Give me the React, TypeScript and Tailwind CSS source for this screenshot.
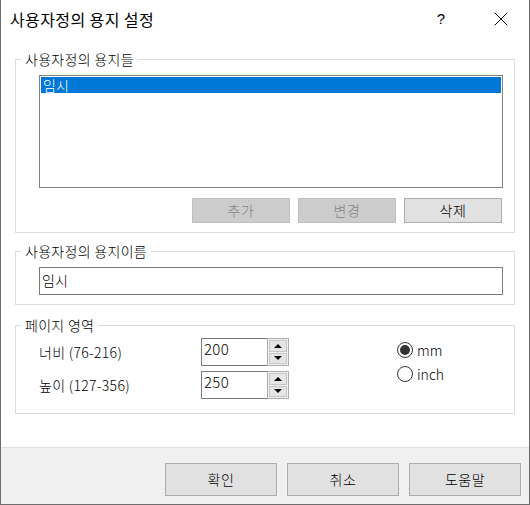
import { X } from "lucide-react";

const ko = { fontFamily: '"Noto Sans CJK KR", "Noto Sans", sans-serif' };
const latin = { fontFamily: '"Liberation Sans", Arial, sans-serif' };

function Group({ label, children, className }: { label: string; children: React.ReactNode; className?: string }) {
  return (
    <fieldset className={"border border-[#dcdcdc] " + (className ?? "")}>
      <legend className="ml-[5px] px-[4px] text-[14px] leading-[16px] tracking-[0.3px] text-black">{label}</legend>
      {children}
    </fieldset>
  );
}

function Spinner({ value }: { value: string }) {
  return (
    <div className="flex h-[28px] w-[88px]">
      <div className="flex-1 border border-[#7a7a7a] border-r-0 bg-white pl-[2px] text-[15px] leading-[20px] tracking-[0.3px] text-black">
        {value}
      </div>
      <div className="flex w-[22px] flex-col gap-[1px] border border-[#adadad] bg-[#f0f0f0] p-[1px]">
        <div className="flex flex-1 items-center justify-center border border-[#c8c8c8] bg-[#e5e5e5]">
          <span className="h-0 w-0 border-x-[4px] border-b-[4px] border-x-transparent border-b-black" />
        </div>
        <div className="flex flex-1 items-center justify-center border border-[#c8c8c8] bg-[#e5e5e5]">
          <span className="h-0 w-0 border-x-[4px] border-t-[4px] border-x-transparent border-t-black" />
        </div>
      </div>
    </div>
  );
}

function Radio({ label, checked }: { label: string; checked?: boolean }) {
  return (
    <div className="flex h-[24px] items-center gap-[4px]">
      <span className="flex h-[16px] w-[16px] items-center justify-center rounded-full border border-[#333333] bg-white">
        {checked && <span className="h-[10px] w-[10px] rounded-full bg-[#333333]" />}
      </span>
      <span className="text-[14px] text-black">{label}</span>
    </div>
  );
}

function DialogButton({ label, disabled, className }: { label: string; disabled?: boolean; className?: string }) {
  return (
    <button
      disabled={disabled}
      className={
        "flex items-center justify-center border text-[14px] font-light tracking-[0.5px] " +
        (disabled
          ? "border-[#bfbfbf] bg-[#cccccc] text-[#838383] "
          : "border-[#adadad] bg-[#e1e1e1] text-black ") +
        (className ?? "")
      }
    >
      {label}
    </button>
  );
}

export default function App() {
  return (
    <div
      className="flex h-[505px] w-[530px] flex-col border border-t-0 border-[#6e6e6e] bg-white font-light text-black"
      style={ko}
    >
      <div className="flex h-[38px] items-center pl-[9px]">
        <span className="text-[16px] font-normal tracking-[0.4px]">사용자정의 용지 설정</span>
        <span className="ml-auto text-[15px]" style={latin}>?</span>
        <X className="ml-[44px] mr-[16px] h-[24px] w-[24px]" strokeWidth={1} />
      </div>

      <div className="px-[14px] pt-[13px]">
        <Group label="사용자정의 용지들">
          <div className="pl-[23px] pt-[8px] pb-[9px]">
            <div className="h-[113px] w-[464px] border border-[#828282] bg-white p-[1px]">
              <div className="h-[16px] bg-[#0078d7] pl-[2px] text-[14px] leading-[16px] text-white">임시</div>
            </div>
            <div className="mt-[10px] flex w-[463px] justify-end gap-[8px]">
              <DialogButton label="추가" disabled className="h-[25px] w-[98px]" />
              <DialogButton label="변경" disabled className="h-[25px] w-[98px]" />
              <DialogButton label="삭제" className="h-[25px] w-[98px]" />
            </div>
          </div>
        </Group>

        <Group label="사용자정의 용지이름" className="mt-[10px]">
          <div className="pl-[23px] pt-[8px] pb-[9px]">
            <div className="h-[28px] w-[464px] border border-[#7a7a7a] bg-white pl-[2px] text-[14px] leading-[24px]">
              임시
            </div>
          </div>
        </Group>

        <Group label="페이지 영역" className="mt-[12px]">
          <div className="flex pl-[23px] pt-[5px] pb-[14px]">
            <div className="flex w-[162px] flex-col gap-[5px] text-[14px] tracking-[0.3px]">
              <div className="flex h-[28px] items-center">너비 (76-216)</div>
              <div className="flex h-[28px] items-center">높이 (127-356)</div>
            </div>
            <div className="flex flex-col gap-[5px]">
              <Spinner value="200" />
              <Spinner value="250" />
            </div>
            <div className="ml-[108px] flex flex-col">
              <Radio label="mm" checked />
              <Radio label="inch" />
            </div>
          </div>
        </Group>
      </div>

      <div className="mt-auto flex h-[57px] justify-end gap-[10px] border-t border-[#dfdfdf] bg-[#f0f0f0] pr-[8px] pt-[15px]">
        <DialogButton label="확인" className="h-[33px] w-[112px]" />
        <DialogButton label="취소" className="h-[33px] w-[112px]" />
        <DialogButton label="도움말" className="h-[33px] w-[112px]" />
      </div>
    </div>
  );
}
